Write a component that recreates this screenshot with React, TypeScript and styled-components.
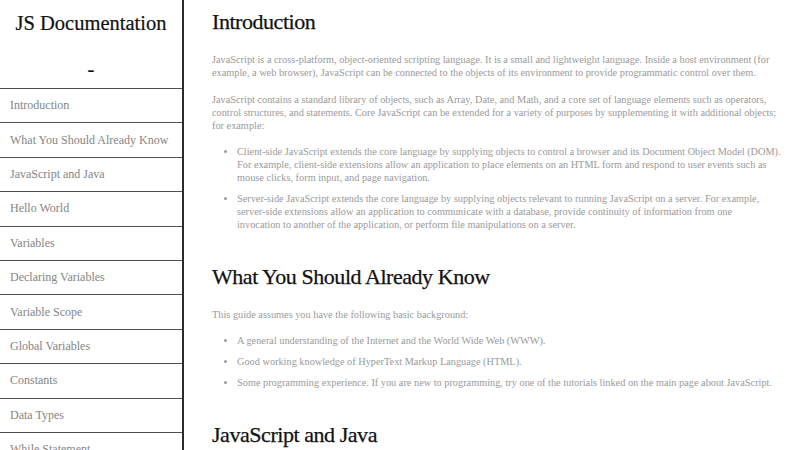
import React from "react";
import styled, { createGlobalStyle } from "styled-components";

const Global = createGlobalStyle`
  html, body { margin: 0; padding: 0; background: #fff; }
  body { font-family: "Liberation Serif", "DejaVu Serif", serif; overflow: hidden; }
  * { box-sizing: border-box; }
`;

const Page = styled.div`
  display: flex;
  width: 800px;
  height: 450px;
  overflow: hidden;
`;

const Sidebar = styled.nav`
  flex: 0 0 184px;
  height: 450px;
  border-right: 2px solid #2b2b2b;
  overflow: hidden;
`;

const NavHeader = styled.header`
  height: 88px;
  margin: 0;
  font-size: 20.5px;
  font-weight: 400;
  color: #111;
  text-align: center;
  line-height: 46px;
  -webkit-text-stroke: 0.2px #111;
`;

const NavLink = styled.a`
  display: flex;
  align-items: center;
  height: 34.4px;
  padding-left: 10px;
  border-top: 1.5px solid #505050;
  color: #858585;
  font-size: 12px;
  text-decoration: none;
  white-space: nowrap;
`;

const Main = styled.main`
  flex: 1;
  padding: 0 10px 0 28px;
  overflow: hidden;
`;

const Section = styled.section`
  margin-bottom: 31px;
`;

const Heading = styled.h2`
  margin: 7px 0 16px;
  font-size: 22px;
  font-weight: 400;
  color: #111;
  line-height: 30px;
  letter-spacing: -0.45px;
  -webkit-text-stroke: 0.25px #111;
`;

const P = styled.p`
  margin: 0 0 14px;
  font-size: 10.3px;
  line-height: 13px;
  color: #9a9a9a;
`;

const List = styled.ul`
  margin: -1px 0 12px;
  padding-left: 25px;
`;

const Item = styled.li`
  font-size: 10.3px;
  line-height: 13px;
  color: #9a9a9a;
  margin-bottom: 8px;
`;

const navItems = [
  "Introduction",
  "What You Should Already Know",
  "JavaScript and Java",
  "Hello World",
  "Variables",
  "Declaring Variables",
  "Variable Scope",
  "Global Variables",
  "Constants",
  "Data Types",
  "While Statement",
];

export default function App() {
  return (
    <>
      <Global />
      <Page>
        <Sidebar>
          <NavHeader>
            JS Documentation
            <br />-
          </NavHeader>
          {navItems.map((n) => (
            <NavLink key={n} href="#">
              {n}
            </NavLink>
          ))}
        </Sidebar>
        <Main>
          <Section>
            <Heading>Introduction</Heading>
            <P>
              JavaScript is a cross-platform, object-oriented scripting language. It is a small and lightweight
              language. Inside a host environment (for example, a web browser), JavaScript can be connected to the
              objects of its environment to provide programmatic control over them.
            </P>
            <P>
              JavaScript contains a standard library of objects, such as Array, Date, and Math, and a core set of
              language elements such as operators, control structures, and statements. Core JavaScript can be
              extended for a variety of purposes by supplementing it with additional objects; for example:
            </P>
            <List>
              <Item>
                Client-side JavaScript extends the core language by supplying objects to control a browser and its
                Document Object Model (DOM). For example, client-side extensions allow an application to place
                elements on an HTML form and respond to user events such as mouse clicks, form input, and page
                navigation.
              </Item>
              <Item>
                Server-side JavaScript extends the core language by supplying objects relevant to running JavaScript
                on a server. For example, server-side extensions allow an application to communicate with a
                database, provide continuity of information from one
                <br />
                invocation to another of the application, or perform file manipulations on a server.
              </Item>
            </List>
          </Section>
          <Section>
            <Heading>What You Should Already Know</Heading>
            <P>This guide assumes you have the following basic background:</P>
            <List>
              <Item>A general understanding of the Internet and the World Wide Web (WWW).</Item>
              <Item>Good working knowledge of HyperText Markup Language (HTML).</Item>
              <Item>
                Some programming experience. If you are new to programming, try one of the tutorials linked on the
                main page about JavaScript.
              </Item>
            </List>
          </Section>
          <Section>
            <Heading>JavaScript and Java</Heading>
          </Section>
        </Main>
      </Page>
    </>
  );
}
